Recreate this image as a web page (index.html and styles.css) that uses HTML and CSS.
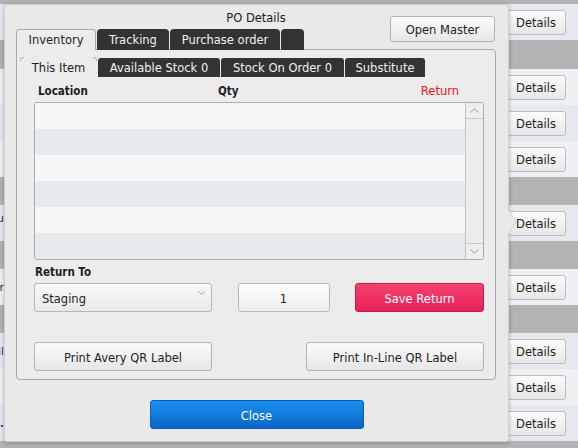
FILE: index.html
```html
<!DOCTYPE html>
<html>
<head>
<meta charset="utf-8">
<title>PO Details</title>
<link rel="stylesheet" href="styles.css">
</head>
<body>
<div class="bg">
  <div class="band band-top"></div>
  <div class="row row-a"><span class="peek"><span></span></span><button class="details">Details</button></div>
  <div class="band"></div>
  <div class="row row-b"><span class="peek"><span></span></span><button class="details">Details</button></div>
  <div class="row row-a"><span class="peek"><span></span></span><button class="details">Details</button></div>
  <div class="row row-b"><span class="peek"><span></span></span><button class="details">Details</button></div>
  <div class="band"></div>
  <div class="row row-a"><span class="peek two"><span>menu<br>store</span></span><button class="details">Details</button></div>
  <div class="band"></div>
  <div class="row row-b"><span class="peek"><span>for</span></span><button class="details">Details</button></div>
  <div class="band"></div>
  <div class="row row-a"><span class="peek link"><span>Detail</span></span><button class="details">Details</button></div>
  <div class="row row-b"><span class="peek"><span></span></span><button class="details">Details</button></div>
  <div class="row row-a"><span class="peek dot"><span>..</span></span><button class="details">Details</button></div>
  <div class="band"></div>
</div>

<div class="modal">
  <div class="modal-head">
    <div class="modal-title">PO Details</div>
    <button class="btn btn-default open-master">Open Master</button>
    <div class="tabs outer-tabs">
      <div class="tab active w-inventory">Inventory</div>
      <div class="tab w-tracking">Tracking</div>
      <div class="tab w-purchase">Purchase order</div>
      <div class="tab w-blank"></div>
    </div>
  </div>

  <div class="panel">
    <div class="tabs inner-tabs">
      <div class="tab active w-item">This Item</div>
      <div class="tab w-avail">Available Stock 0</div>
      <div class="tab w-order">Stock On Order 0</div>
      <div class="tab w-subst">Substitute</div>
    </div>
    <div class="pane">
      <div class="grid-head">
        <span class="col-loc">Location</span>
        <span class="col-qty">Qty</span>
        <span class="col-return">Return</span>
      </div>
      <div class="grid">
        <div class="grid-rows">
          <div class="grow"></div>
          <div class="grow alt"></div>
          <div class="grow"></div>
          <div class="grow alt"></div>
          <div class="grow"></div>
          <div class="grow alt"></div>
        </div>
        <div class="scrollbar">
          <div class="sb-btn sb-up"><svg width="9" height="5" viewBox="0 0 9 5"><polyline points="0.5,4.5 4.5,0.8 8.5,4.5" fill="none" stroke="#9a9a9a" stroke-width="1"/></svg></div>
          <div class="sb-track"></div>
          <div class="sb-btn sb-down"><svg width="9" height="5" viewBox="0 0 9 5"><polyline points="0.5,0.5 4.5,4.2 8.5,0.5" fill="none" stroke="#9a9a9a" stroke-width="1"/></svg></div>
        </div>
      </div>
      <div class="field-label">Return To</div>
      <div class="controls">
        <div class="select"><span>Staging</span><svg class="chev" width="7" height="4" viewBox="0 0 7 4"><polyline points="0.5,0.5 3.5,3.3 6.5,0.5" fill="none" stroke="#a0a0a0" stroke-width="1"/></svg></div>
        <div class="qty">1</div>
        <button class="btn btn-save">Save Return</button>
      </div>
      <div class="prints">
        <button class="btn btn-default print">Print Avery QR Label</button>
        <button class="btn btn-default print">Print In-Line QR Label</button>
      </div>
    </div>
  </div>

  <div class="modal-foot">
    <button class="btn btn-primary close">Close</button>
  </div>
</div>
</body>
</html>
```

FILE: styles.css
```css
* { box-sizing: border-box; }

html, body {
  margin: 0;
  padding: 0;
}

body {
  width: 578px;
  height: 448px;
  overflow: hidden;
  font-family: "DejaVu Sans", Verdana, sans-serif;
  font-size: 11.5px;
  color: #1e1e1e;
  background: #b3b3b3;
  position: relative;
}

button {
  font-family: inherit;
  font-size: inherit;
  margin: 0;
  cursor: pointer;
}

/* ---------- background page ---------- */
.bg {
  display: flex;
  flex-direction: column;
}

.band {
  height: 28px;
  background: #b3b3b3;
}
.band-top { height: 4px; }
.bg > .band:nth-child(3) { height: 29px; }

.row {
  height: 36px;
  display: flex;
  align-items: center;
  justify-content: space-between;
}
.row-a { background: #e5e8ee; }
.row-b { background: #eef0f3; }

.peek {
  width: 4px;
  height: 100%;
  overflow: hidden;
  display: flex;
  justify-content: flex-end;
  align-items: center;
  font-size: 11px;
  line-height: 13px;
  white-space: nowrap;
  color: #333;
}
.peek.two { align-items: flex-start; padding-top: 7px; }
.peek.link { color: #6a0a8a; }
.peek.dot { color: #2a4a8a; font-weight: bold; }

.details {
  width: 60px;
  height: 25px;
  margin-right: 12px;
  padding: 2px 0 0;
  border: 1px solid #bdbdbd;
  border-radius: 3px;
  background: linear-gradient(#fbfbfb, #e7e7e7);
  color: #1e1e1e;
}

/* ---------- modal ---------- */
.modal {
  position: absolute;
  left: 4px;
  top: 4px;
  width: 505px;
  height: 438px;
  background: #e9e9e9;
  border: 1px solid #d2d2d2;
  border-radius: 3px;
  box-shadow: 0 1px 4px rgba(0, 0, 0, 0.25);
  padding: 0 12px 0 11px;
}

.modal::before,
.modal::after {
  content: "";
  position: absolute;
  top: 205px;
  width: 0;
  height: 0;
  border-top: 12.5px solid transparent;
  border-bottom: 12.5px solid transparent;
}
.modal::before {
  right: -9px;
  border-left: 8px solid #d4d4d4;
}
.modal::after {
  right: -8px;
  border-left: 8px solid #e9e9e9;
}

.modal-head {
  display: grid;
  grid-template-columns: 1fr auto;
  grid-template-rows: 24px 20px;
}

.modal-title {
  grid-area: 1 / 1 / 2 / 3;
  text-align: center;
  line-height: 24px;
  padding-top: 1px;
  color: #1e1e1e;
}

.open-master {
  grid-area: 1 / 2 / 3 / 3;
  align-self: start;
  margin-top: 11px;
  margin-right: 1px;
  width: 105px;
  height: 26px;
}

/* ---------- tabs ---------- */
.tabs {
  display: flex;
  align-items: flex-start;
  gap: 1px;
}

.outer-tabs {
  grid-area: 2 / 1 / 3 / 2;
  height: 20px;
}

.tab {
  height: 21px;
  line-height: 18px;
  padding-top: 2px;
  text-align: center;
  background: #333333;
  color: #f2f2f2;
  border-radius: 4px 4px 0 0;
  white-space: nowrap;
}

.w-inventory { width: 80px; }
.w-tracking { width: 72px; }
.w-purchase { width: 110px; }
.w-blank { width: 23px; }

.tab.active {
  position: relative;
  z-index: 1;
  background: #ececec;
  color: #1e1e1e;
  border: 1px solid #a9a9a9;
  border-bottom: none;
  line-height: 17px;
}

.panel {
  background: #ececec;
  border: 1px solid #a9a9a9;
  border-radius: 0 4px 4px 4px;
  padding: 8px 11px 8px 3px;
}

.inner-tabs {
  height: 19px;
}
.inner-tabs .tab {
  height: 19px;
  line-height: 17px;
  padding-top: 2px;
  border-radius: 3px 3px 0 0;
}
.w-item { width: 77px; }
.w-avail { width: 122px; }
.w-order { width: 123px; }
.w-subst { width: 80px; }

.inner-tabs .tab.active {
  background: transparent;
  border: none;
  border-top-left-radius: 4px;
  line-height: 17px;
}
.inner-tabs .tab.active::before,
.inner-tabs .tab.active::after {
  content: "";
  position: absolute;
  top: -1px;
  width: 3px;
  height: 3px;
  border-top: 1px solid #b8b8b8;
}
.inner-tabs .tab.active::before {
  left: 0;
  border-left: 1px solid #b8b8b8;
  border-top-left-radius: 3px;
}
.inner-tabs .tab.active::after {
  right: 0;
  border-right: 1px solid #b8b8b8;
  border-top-right-radius: 3px;
}

.pane {
  padding: 0 0 0 14px;
}

.grid-head {
  margin-top: 6px;
  height: 14px;
  line-height: 14px;
  padding-top: 1px;
  display: grid;
  grid-template-columns: 180px 1fr auto;
  padding-left: 4px;
  padding-right: 25px;
}
.grid-head .col-loc,
.grid-head .col-qty {
  font-weight: bold;
  font-stretch: condensed;
}
.grid-head .col-return {
  color: #e8141c;
}

.grid {
  margin-top: 5px;
  height: 158px;
  display: flex;
  border: 1px solid #acacac;
  border-radius: 3px;
  overflow: hidden;
  background: #f7f7f7;
}

.grid-rows {
  flex: 1;
  display: flex;
  flex-direction: column;
}
.grow {
  height: 26px;
  background: #f7f7f7;
}
.grow.alt { background: #e7eaed; }

.scrollbar {
  width: 18px;
  border-left: 1px solid #c2c2c2;
  background: #ededed;
  display: flex;
  flex-direction: column;
}
.sb-btn {
  height: 16px;
  display: flex;
  align-items: center;
  justify-content: center;
  background: #efefef;
}
.sb-up { border-bottom: 1px solid #c8c8c8; }
.sb-down { border-top: 1px solid #c8c8c8; }
.sb-track { flex: 1; }

.field-label {
  margin-top: 4px;
  height: 14px;
  line-height: 14px;
  padding-top: 1px;
  font-weight: bold;
  font-stretch: condensed;
  padding-left: 1px;
}

.controls {
  margin-top: 5px;
  display: grid;
  grid-template-columns: 178px 92px 129px;
  justify-content: space-between;
  height: 29px;
}

.select {
  height: 29px;
  border: 1px solid #b7b7b7;
  border-radius: 3px;
  background: linear-gradient(#f9f9f9, #e9e9e9);
  display: flex;
  align-items: center;
  justify-content: space-between;
  padding: 2px 6px 0 7px;
}
.select .chev { margin-top: -12px; }

.qty {
  height: 29px;
  border: 1px solid #b7b7b7;
  border-radius: 3px;
  background: linear-gradient(#fdfdfd, #eeeeee);
  display: flex;
  align-items: center;
  justify-content: center;
  padding-top: 2px;
}

.btn {
  border-radius: 3px;
  padding: 2px 0 0;
}

.btn-default {
  border: 1px solid #b3b3b3;
  background: linear-gradient(#fbfbfb, #e6e6e6);
  color: #1e1e1e;
}

.btn-save {
  height: 29px;
  border: 1px solid #c4194c;
  background: linear-gradient(#f4436f, #e8205a);
  color: #ffffff;
}

.prints {
  margin-top: 30px;
  display: flex;
  justify-content: space-between;
}
.print {
  width: 178px;
  height: 29px;
}

.modal-foot {
  margin-top: 20px;
  display: flex;
  justify-content: center;
  padding-left: 1px;
}

.btn-primary {
  border: 1px solid #0a5fb5;
  background: linear-gradient(#1b8ff2, #0b66c4);
  color: #ffffff;
}
.close {
  width: 214px;
  height: 29px;
}
```
